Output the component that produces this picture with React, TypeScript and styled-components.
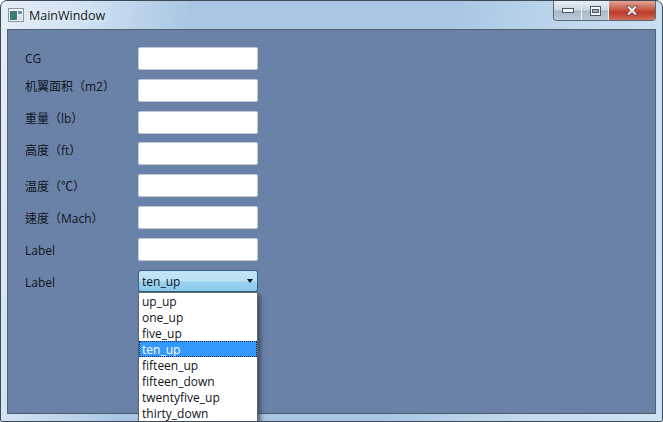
import React from "react"
import styled, { createGlobalStyle } from "styled-components"

const GlobalStyle = createGlobalStyle`
  html, body {
    margin: 0;
    padding: 0;
    background: #ffffff;
  }
`

const Window = styled.div`
  position: relative;
  box-sizing: border-box;
  width: 663px;
  height: 422px;
  display: flex;
  flex-direction: column;
  overflow: hidden;
  border: 1px solid #3c4a58;
  border-radius: 7px 7px 2px 2px;
  background: linear-gradient(100deg, #e4eef8 0, #cfe1f2 12%, #a9c7e4 26%, #a9c7e4 62%, #c4dbf0 82%, #cfe2f4 100%);
  font-family: "Open Sans", "Noto Sans CJK TC", sans-serif;
`

const TitleBar = styled.div`
  height: 28px;
  flex: none;
  display: flex;
  align-items: flex-start;
  justify-content: space-between;
  padding: 0 6px 0 7px;
`

const TitleGroup = styled.div`
  display: flex;
  align-items: center;
  gap: 5px;
  height: 28px;
`

const TitleText = styled.span`
  font-size: 12.5px;
  color: #101820;
  text-shadow: 0 0 6px rgba(255, 255, 255, 0.9);
`

const CaptionButtons = styled.div`
  display: flex;
  height: 19px;
  border: 1px solid #5a6672;
  border-top: none;
  border-radius: 0 0 4px 4px;
  overflow: hidden;
`

const CaptionButton = styled.div<{ $width: number; $close?: boolean }>`
  width: ${p => p.$width}px;
  display: flex;
  align-items: center;
  justify-content: center;
  border-left: 1px solid #eef3f8;
  &:first-child {
    border-left: none;
  }
  background: ${p =>
    p.$close
      ? "linear-gradient(180deg, #e2a598 0, #c9614e 40%, #bd3a26 60%, #cf6e5c 100%)"
      : "linear-gradient(180deg, #e6edf4 0, #ccd8e4 45%, #a9b9c9 55%, #bccbd9 100%)"};
`

const Client = styled.div`
  flex: 1;
  margin: 0 6px 7px 6px;
  padding: 17px 0 0 17px;
  background: #6b82a8;
  border: 1px solid #56616d;
  border-bottom-color: #4e5a68;
`

const Row = styled.div<{ $tight?: boolean }>`
  display: flex;
  height: ${p => (p.$tight ? 22 : 23)}px;
  margin-bottom: 9px;
`

const Label = styled.div<{ $shift: number }>`
  width: 113px;
  font-size: 12px;
  line-height: 16px;
  color: #10141c;
  margin-top: ${p => p.$shift}px;
  white-space: nowrap;
  text-spacing-trim: space-all;
  font-feature-settings: "palt" 0, "halt" 0;
`

const TextInput = styled.div`
  box-sizing: border-box;
  width: 120px;
  height: 23px;
  background: #ffffff;
  border: 1px solid #c3cad6;
  border-radius: 2px;
`

const ComboWrap = styled.div`
  position: relative;
  width: 120px;
`

const ComboBox = styled.div`
  box-sizing: border-box;
  width: 120px;
  height: 22px;
  display: flex;
  align-items: center;
  justify-content: space-between;
  padding: 0 4px 0 3px;
  font-size: 12px;
  color: #10141c;
  border: 1px solid #2c628b;
  border-radius: 3px;
  background: linear-gradient(180deg, #c4e5f6 0, #bce1f5 50%, #98d1ef 55%, #8ecaea 100%);
`

const Arrow = styled.div`
  width: 0;
  height: 0;
  border-left: 3.5px solid transparent;
  border-right: 3.5px solid transparent;
  border-top: 4px solid #101010;
`

const DropDown = styled.div`
  position: absolute;
  top: 22px;
  left: 0;
  box-sizing: border-box;
  width: 120px;
  height: 140px;
  background: #ffffff;
  border: 1px solid #646464;
  box-shadow: 3px 3px 4px rgba(30, 40, 60, 0.55);
`

const Option = styled.div<{ $selected?: boolean }>`
  box-sizing: border-box;
  height: 16px;
  line-height: 18px;
  padding: 0 3px;
  font-size: 12px;
  color: ${p => (p.$selected ? "#ffffff" : "#10141c")};
  background: ${p => (p.$selected ? "#3399ff" : "transparent")};
  outline: ${p => (p.$selected ? "1px dotted #0c2a4a" : "none")};
  outline-offset: -1px;
`

const OPTIONS = [
  "up_up",
  "one_up",
  "five_up",
  "ten_up",
  "fifteen_up",
  "fifteen_down",
  "twentyfive_up",
  "thirty_down",
]

const FIELDS = [
  { label: "CG", shift: 4 },
  { label: "机翼面积（m2）", shift: 0 },
  { label: "重量（lb）", shift: 0, tight: true },
  { label: "高度（ft）", shift: 1 },
  { label: "温度（℃）", shift: 5 },
  { label: "速度（Mach）", shift: 5 },
  { label: "Label", shift: 5 },
]

const AppIcon = () => (
  <svg width="16" height="14" viewBox="0 0 16 14">
    <rect x="0.5" y="0.5" width="15" height="13" fill="#eef2f6" stroke="#8a949e" />
    <rect x="2" y="3" width="7" height="9" fill="#3f7a78" />
    <rect x="10" y="3" width="4" height="3" fill="#6d8fb5" />
    <rect x="10" y="7" width="4" height="5" fill="#d8dee6" />
  </svg>
)

export default function App() {
  return (
    <Window>
      <GlobalStyle />
      <TitleBar>
        <TitleGroup>
          <AppIcon />
          <TitleText>MainWindow</TitleText>
        </TitleGroup>
        <CaptionButtons>
          <CaptionButton $width={27}>
            <svg width="12" height="6" viewBox="0 0 12 6">
              <rect x="0.5" y="0.5" width="11" height="4" fill="#f4f6f8" stroke="#4a5866" />
            </svg>
          </CaptionButton>
          <CaptionButton $width={26}>
            <svg width="11" height="10" viewBox="0 0 11 10">
              <rect x="0.5" y="0.5" width="10" height="9" fill="#f4f6f8" stroke="#4a5866" />
              <rect x="2.5" y="3.5" width="6" height="3" fill="#9fb2c5" stroke="#4a5866" />
            </svg>
          </CaptionButton>
          <CaptionButton $width={46} $close>
            <svg width="14" height="11" viewBox="0 0 14 11">
              <path
                d="M1 1h3.5L7 3.6 9.5 1H13L9 5.5 13 10H9.5L7 7.4 4.5 10H1L5 5.5z"
                fill="#f2f4f8"
                stroke="#5a3a3a"
                strokeWidth="0.8"
              />
            </svg>
          </CaptionButton>
        </CaptionButtons>
      </TitleBar>
      <Client>
        {FIELDS.map(field => (
          <Row key={field.label} $tight={field.tight}>
            <Label $shift={field.shift}>{field.label}</Label>
            <TextInput />
          </Row>
        ))}
        <Row>
          <Label $shift={5}>Label</Label>
          <ComboWrap>
            <ComboBox>
              ten_up
              <Arrow />
            </ComboBox>
            <DropDown>
              {OPTIONS.map(option => (
                <Option key={option} $selected={option === "ten_up"}>
                  {option}
                </Option>
              ))}
            </DropDown>
          </ComboWrap>
        </Row>
      </Client>
    </Window>
  )
}
